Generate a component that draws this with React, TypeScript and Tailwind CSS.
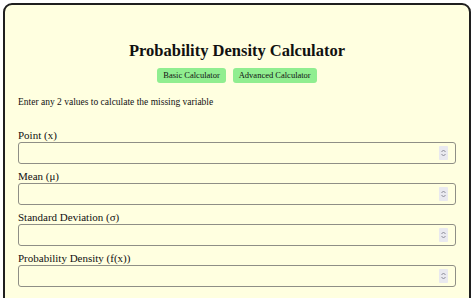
import { useState } from 'react'

const fields = [
  { key: 'x', label: 'Point (x)' },
  { key: 'mean', label: 'Mean (μ)' },
  { key: 'sd', label: 'Standard Deviation (σ)' },
  { key: 'fx', label: 'Probability Density (f(x))' },
]

function Spinner() {
  return (
    <span className="absolute right-[8px] top-[4px] w-[9px] h-[14px] bg-[#e9e9ef] rounded-[1px] flex items-center justify-center pointer-events-none">
      <svg width="7" height="10" viewBox="0 0 7 10" fill="none" stroke="#8a8a96" strokeWidth="1">
        <path d="M1.5 4 L3.5 2 L5.5 4" />
        <path d="M1.5 6 L3.5 8 L5.5 6" />
      </svg>
    </span>
  )
}

export default function App() {
  const [values, setValues] = useState<Record<string, string>>({ x: '', mean: '', sd: '', fx: '' })

  return (
    <div className="bg-white p-[3px] min-h-screen" style={{ fontFamily: '"Liberation Serif", "Times New Roman", serif' }}>
      <div className="border-2 border-[#1f1f1f] rounded-[9px] bg-[#ffffe0] px-[13px] pt-[35px] pb-6 text-[#111]">
        <h1 className="text-center text-[16.5px] font-bold leading-[22px]">Probability Density Calculator</h1>
        <div className="flex justify-center gap-[7px] mt-[6px]">
          <button className="bg-[#90ee90] rounded-[3px] px-[6px] h-[15px] text-[8.5px] leading-[15px]">Basic Calculator</button>
          <button className="bg-[#90ee90] rounded-[3px] px-[6px] h-[15px] text-[8.5px] leading-[15px]">Advanced Calculator</button>
        </div>
        <p className="text-[9.5px] leading-[12px] mt-[13px] mb-[20px]">Enter any 2 values to calculate the missing variable</p>
        <div className="flex flex-col gap-[5px]">
          {fields.map(f => (
            <div key={f.key} className="flex flex-col">
              <label className="text-[11px] leading-[14px]">{f.label}</label>
              <div className="relative">
                <input
                  type="number"
                  value={values[f.key]}
                  onChange={e => setValues({ ...values, [f.key]: e.target.value })}
                  className="block w-full h-[22px] border border-[#8f8f86] rounded-[3px] bg-transparent px-2 text-[12px] outline-none [appearance:textfield] [&::-webkit-inner-spin-button]:appearance-none"
                />
                <Spinner />
              </div>
            </div>
          ))}
        </div>
      </div>
    </div>
  )
}
